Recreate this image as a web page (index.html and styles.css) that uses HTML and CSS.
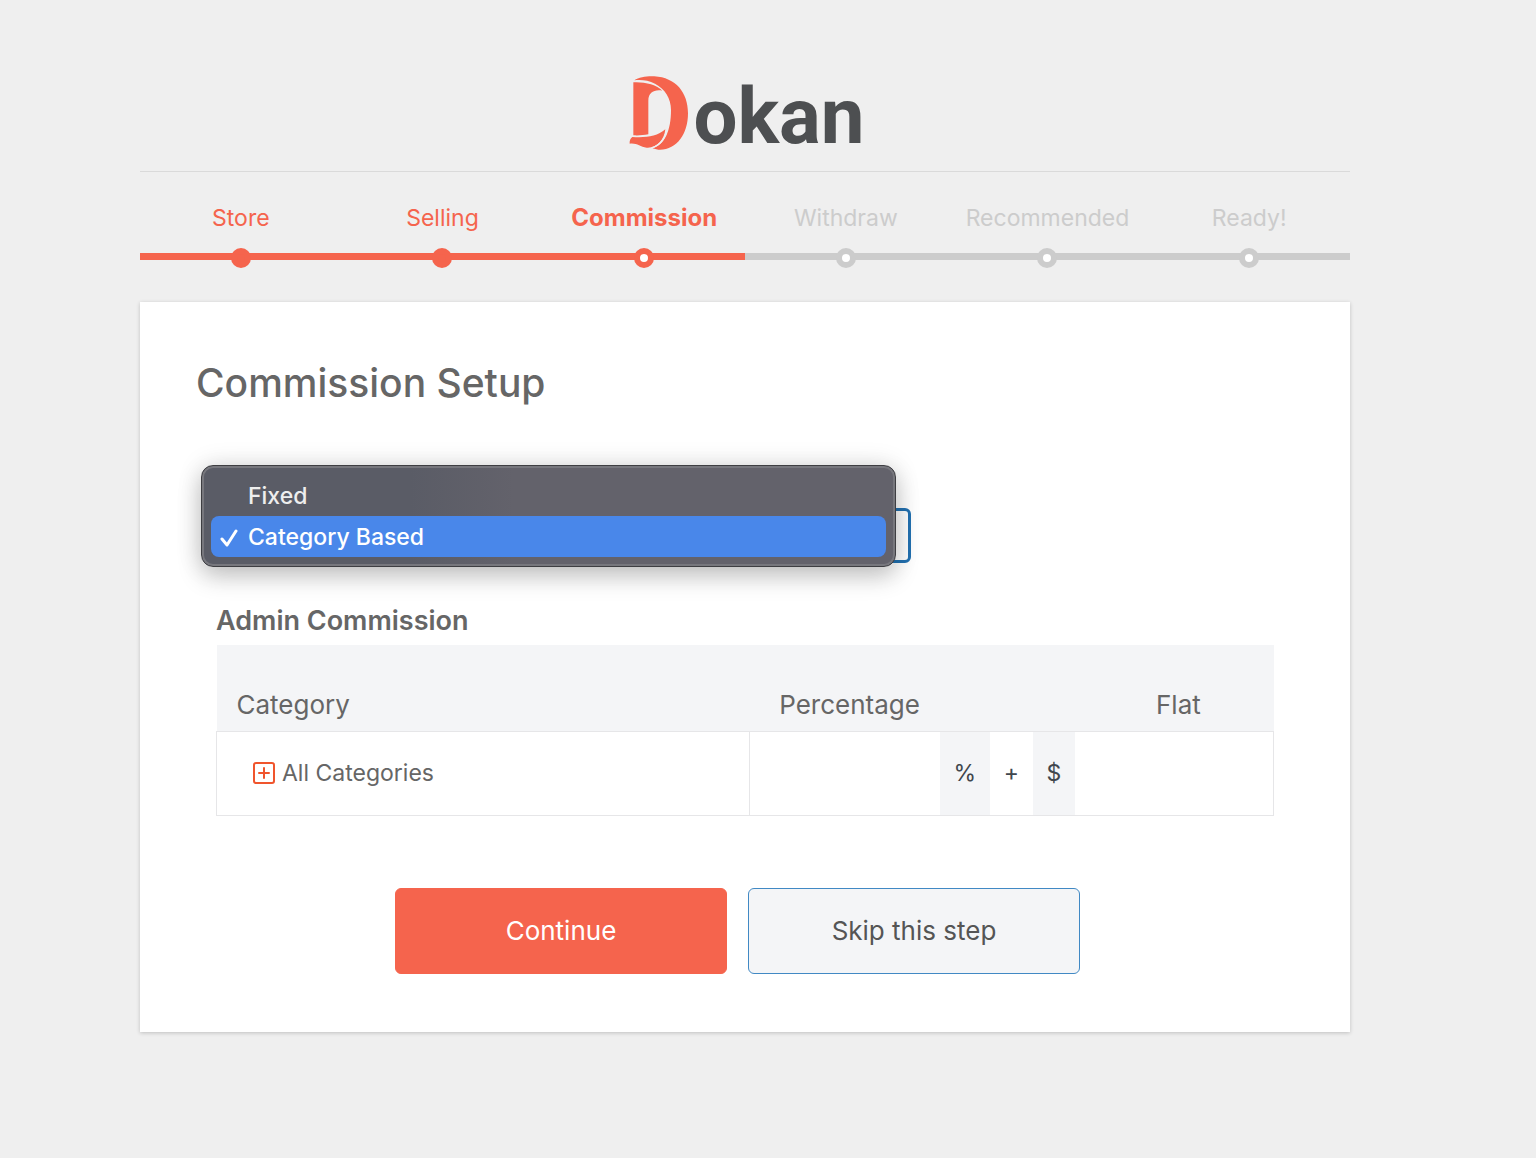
FILE: index.html
```html
<!DOCTYPE html>
<html lang="en">
<head>
<meta charset="utf-8">
<meta name="viewport" content="width=device-width, initial-scale=1">
<title>Dokan - Setup Wizard</title>
<link rel="stylesheet" href="styles.css">
</head>
<body>
<main class="wizard">
  <header class="brand">
    <a class="logo" href="#">
      <svg class="logo-mark" viewBox="42 30 180 228" aria-hidden="true">
        <path d="M58 46C72 36 96 33 118 34C182 38 219 82 219 145C219 208 184 257 130 254L112 250C150 240 168 195 168 135C168 100 150 72 120 56C100 46 80 44 58 46Z"/>
        <path d="M55 52C85 50 125 58 142 77C118 73 100 82 100 108V208C85 211 68 212 55 211Z"/>
        <path d="M52 216C90 219 126 215 151 193C148 225 125 250 95 248C75 245 65 233 44 236C43 228 46 220 52 216Z"/>
        <path class="logo-cut" d="M158 182C154 214 138 240 110 249"/>
      </svg>
      <span class="logo-text">okan</span>
    </a>
  </header>

  <ol class="steps">
    <li class="step done"><a href="#">Store</a></li>
    <li class="step done"><a href="#">Selling</a></li>
    <li class="step active" aria-current="step">Commission</li>
    <li class="step">Withdraw</li>
    <li class="step">Recommended</li>
    <li class="step">Ready!</li>
  </ol>

  <form class="card">
    <h1>Commission Setup</h1>

    <div class="fields">
      <div class="type">
        <select class="type-select" aria-label="Commission type">
          <option>Fixed</option>
          <option selected>Category Based</option>
        </select>
        <ul class="menu" role="listbox" aria-label="Commission type options">
          <li class="menu-item" role="option" aria-selected="false">Fixed</li>
          <li class="menu-item selected" role="option" aria-selected="true">
            <svg class="check" viewBox="0 0 20 20" aria-hidden="true"><path d="M3 12L8 18L17 4"/></svg>Category Based
          </li>
        </ul>
      </div>

      <h2>Admin Commission</h2>
      <table class="rates">
        <colgroup><col class="col-category"><col><col class="col-flat"></colgroup>
        <thead>
          <tr><th scope="col">Category</th><th scope="col" class="percentage">Percentage</th><th scope="col" class="flat">Flat</th></tr>
        </thead>
        <tbody>
          <tr>
            <td>
              <div class="category">
                <button type="button" class="expand" aria-label="Expand all categories">
                  <svg viewBox="0 0 22 22" aria-hidden="true"><rect x="1" y="1" width="20" height="20" rx="2"/><path d="M6 11H16M11 6V16"/></svg>
                </button>
                <span>All Categories</span>
              </div>
            </td>
            <td colspan="2">
              <div class="rate">
                <input type="text" aria-label="Percentage">
                <span class="unit">%</span>
                <span class="plus">+</span>
                <span class="unit">$</span>
                <input type="text" aria-label="Flat">
              </div>
            </td>
          </tr>
        </tbody>
      </table>
    </div>

    <div class="actions">
      <button type="submit" class="button primary">Continue</button>
      <button type="button" class="button">Skip this step</button>
    </div>
  </form>
</main>
</body>
</html>
```
FILE: styles.css
```css
*, ::after { box-sizing: border-box; }

body {
  margin: 0;
  padding: 72px 186px 72px 140px;
  background: #efefef;
  color: #666;
  font-family: Inter, "Liberation Sans", sans-serif;
  font-size: 23px;
}

a { color: inherit; text-decoration: none; }

.wizard { max-width: 1400px; margin: 0 auto; }

.brand {
  display: flex;
  justify-content: center;
  height: 100px;
  border-bottom: 1px solid #dadada;
}

.logo { display: flex; align-items: flex-start; gap: 4px; height: 80px; padding: 3px 0 0 4px; }
.logo-mark { width: 60px; height: 76px; fill: #f5644d; }
.logo-cut { fill: none; stroke: #efefef; stroke-width: 4; }
.logo-text {
  color: #4d4f51;
  font-family: Roboto, "Liberation Sans", sans-serif;
  font-size: 78px;
  font-weight: 700;
  line-height: 84px;
}

.steps {
  display: grid;
  grid-template-columns: repeat(6, 1fr);
  margin: 0;
  padding: 30px 0 42px;
  list-style: none;
}

.step {
  position: relative;
  height: 58px;
  border-bottom: 7px solid #ccc;
  color: #ccc;
  line-height: 32px;
  text-align: center;
}
.step.done, .step.active { border-color: #f5644d; color: #f5644d; }
.step.active { font-size: 24px; font-weight: 700; }
.step::after {
  content: "";
  position: absolute;
  left: calc(50% - 10px);
  bottom: -15px;
  width: 20px;
  height: 20px;
  border: 6px solid #ccc;
  border-radius: 50%;
  background: #fff;
}
.step.active::after { border-color: #f5644d; }
.step.done::after { border-color: #f5644d; background: #f5644d; }

.card {
  padding: 56px 56px 58px;
  background: #fff;
  box-shadow: 0 1px 4px rgba(0, 0, 0, .2);
}

h1 { margin: 0; font-size: 39px; font-weight: 500; line-height: 50px; }

.fields { padding: 100px 20px 0; }

.type { position: relative; width: 65.7%; }
.type-select {
  display: block;
  width: 100%;
  height: 55px;
  padding: 0 16px;
  appearance: none;
  border: 3px solid #2271b1;
  border-radius: 6px;
  background: #fff;
  color: #666;
  font: inherit;
}

.menu {
  position: absolute;
  right: 15px;
  bottom: -4px;
  width: 100%;
  margin: 0;
  padding: 9px;
  list-style: none;
  border: 1px solid #3e3e42;
  border-radius: 12px;
  background: linear-gradient(90deg, #5a5c66 30%, #63626b 45%);
  box-shadow: inset 0 0 0 2px #77777d, 0 10px 24px rgba(0, 0, 0, .2), 0 0 26px rgba(0, 0, 0, .12);
  color: #eee;
  font-weight: 500;
}
.menu-item { display: flex; align-items: center; height: 41px; padding-left: 37px; border-radius: 8px; }
.menu-item.selected { padding-left: 8px; gap: 9px; background: #4987ea; color: #fff; }
.check { width: 20px; height: 20px; fill: none; stroke: #fff; stroke-width: 3; stroke-linecap: round; stroke-linejoin: round; }

h2 { margin: 42px 0 8px; font-size: 27px; font-weight: 600; line-height: 32px; }

.rates { width: 100%; border-collapse: collapse; table-layout: fixed; }
.col-category { width: 50.4%; }
.col-flat { width: 18%; }
.rates thead { background: #f4f5f7; }
.rates th {
  height: 86px;
  padding: 34px 20px 0;
  font-size: 26px;
  font-weight: 400;
  text-align: left;
}
.rates th.percentage { padding-left: 30px; }
.rates th.flat { text-align: center; }
.rates td { height: 84px; padding: 0; border: 1px solid #e6e6e8; }

.category { display: flex; align-items: center; gap: 7px; padding-left: 36px; }
.expand { width: 22px; height: 22px; padding: 0; border: 0; background: none; }
.expand svg { display: block; width: 22px; height: 22px; fill: none; stroke: #f0552d; stroke-width: 2; stroke-linecap: round; }

.rate { display: grid; grid-template-columns: 24fr 50px 43px 42px 25fr; height: 83px; color: #40464d; }
.rate input { width: 100%; min-width: 0; padding: 0 16px; border: 0; background: none; font: inherit; }
.unit, .plus { display: flex; align-items: center; justify-content: center; }
.unit { background: #f4f5f7; }

.actions { display: flex; justify-content: center; gap: 21px; padding: 72px 15px 0 0; }
.button {
  width: 332px;
  height: 86px;
  border: 1px solid #4189c4;
  border-radius: 6px;
  background: #f4f5f7;
  color: #555;
  font: inherit;
  font-size: 26px;
}
.button.primary { border-color: #f5644d; background: #f5644d; color: #fff; }
```
